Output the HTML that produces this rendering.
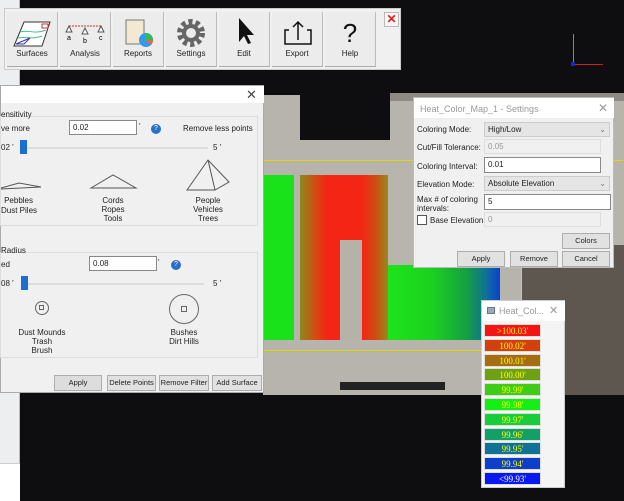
<!DOCTYPE html>
<html><head><style>
*{margin:0;padding:0;box-sizing:border-box}
body{width:624px;height:501px;background:#0e0e10;position:relative;overflow:hidden;font-family:"Liberation Sans",sans-serif;font-size:8px;color:#222}
.a{position:absolute;white-space:nowrap}
.tb{left:4px;top:8px;width:397px;height:62px;background:#f0f0f0;border:1px solid #ccc}
.btn{position:absolute;top:3px;width:51px;height:55px;background:#ececec;border-right:1px solid #bbb;border-bottom:1px solid #aaa;text-align:center;font-size:8px}
.btn span{position:absolute;left:0;right:0;bottom:8px}
.inp{position:absolute;background:#fff;border:1px solid #888;height:15px;font-size:8px;padding:2px 3px;white-space:nowrap}
.pb{position:absolute;background:#e1e1e1;border:1px solid #adadad;font-size:7.5px;text-align:center;height:16px;line-height:14px;white-space:nowrap;overflow:hidden}
.leg div{height:13px;margin-bottom:1.8px;width:57px;text-align:center;color:#ff0;font-family:"Liberation Serif",serif;font-size:9px;line-height:13px;border:1px solid #ddd}
</style></head><body>
<div class="a" style="left:0;top:0;width:20px;height:501px;background:#eceeef;border-right:1px solid #bbb"></div>
<div class="a" style="left:0;top:463px;width:20px;height:38px;background:#fff;border-top:1px solid #ccc"></div>
<div class="a" style="left:263px;top:95px;width:361px;height:300px;background:#b7b4ad"></div>
<div class="a" style="left:300px;top:85px;width:90px;height:55px;background:#0e0e10"></div>
<div class="a" style="left:390px;top:93px;width:234px;height:8px;background:#8f8a84"></div>
<div class="a" style="left:522px;top:245px;width:102px;height:150px;background:#5e5750"></div>
<div class="a" style="left:263px;top:160px;width:360px;height:1px;background:#e0d800"></div>
<div class="a" style="left:263px;top:350px;width:260px;height:1px;background:#e0d800"></div>
<div class="a" style="left:521px;top:250px;width:1px;height:100px;background:#e0d800"></div>
<div class="a" style="left:263px;top:175px;width:31px;height:165px;background:#19e21a"></div>
<div class="a" style="left:300px;top:175px;width:88px;height:165px;background:linear-gradient(90deg,#8a8a20,#d34b10 18%,#f52515 30%,#f52515 70%,#d04a10 85%,#9b8820)"></div>
<div class="a" style="left:340px;top:240px;width:22px;height:100px;background:#b5b2aa"></div>
<div class="a" style="left:388px;top:175px;width:112px;height:165px;background:linear-gradient(90deg,#1ee41a,#1bd020 40%,#15a040 70%,#0f6f9a 88%,#0b3fd0)"></div>
<div class="a" style="left:388px;top:175px;width:30px;height:90px;background:#b8b5ae"></div>
<div class="a" style="left:340px;top:382px;width:105px;height:8px;background:#222"></div>
<div class="a tb">
<div class="btn" style="left:2px"><svg width="44" height="34" style="margin-top:4px"><path d="M4 30 L14 6 L40 6 L32 30Z" fill="#fff" stroke="#333"/><path d="M10 16c8-3 14 3 26-2M8 22c8-2 14 2 24-2" stroke="#4b9" fill="none"/><path d="M6 28 L20 22 L14 28Z" fill="none" stroke="#33a"/><path d="M32 8h6v4h-6z" fill="none" stroke="#c33"/></svg><span>Surfaces</span></div>
<div class="btn" style="left:55px"><svg width="44" height="30" style="margin-top:4px"><path d="M6 10H38" stroke="#c33" stroke-dasharray="2 1"/><path d="M6 10l-3 6h6zM22 12l-3 6h6zM38 10l-3 6h6z" fill="#fff" stroke="#555"/><text x="4" y="24" font-size="7">a</text><text x="20" y="27" font-size="7">b</text><text x="36" y="24" font-size="7">c</text></svg><span>Analysis</span></div>
<div class="btn" style="left:108px"><svg width="44" height="34" style="margin-top:4px"><rect x="10" y="4" width="18" height="24" fill="#f3e8d2" stroke="#777"/><circle cx="30" cy="24" r="7" fill="#39e"/><path d="M30 24V17a7 7 0 0 1 7 7z" fill="#3b5"/><path d="M30 24h7a7 7 0 0 1-2 5z" fill="#e63"/></svg><span>Reports</span></div>
<div class="btn" style="left:161px"><svg width="44" height="34" style="margin-top:4px"><circle cx="22" cy="17" r="11" fill="none" stroke="#666" stroke-width="6" stroke-dasharray="4 3"/><circle cx="22" cy="17" r="7" fill="none" stroke="#666" stroke-width="4"/></svg><span>Settings</span></div>
<div class="btn" style="left:214px"><svg width="44" height="34" style="margin-top:2px"><path d="M17 4V28l5-6 4 8 3-1-4-8h7z" fill="#111"/></svg><span>Edit</span></div>
<div class="btn" style="left:267px"><svg width="44" height="34" style="margin-top:4px"><path d="M14 14h-4v14h26V14h-4M23 24V6M18 11l5-5 5 5" fill="none" stroke="#111" stroke-width="1.5"/></svg><span>Export</span></div>
<div class="btn" style="left:320px"><div style="font-size:26px;margin-top:6px;color:#111">?</div><span>Help</span></div>
<div class="a" style="left:379px;top:3px;width:15px;height:15px;background:#f6f6f6;border:1px solid #bbb;color:#d22;font-size:12px;font-weight:bold;text-align:center;line-height:13px">✕</div>
</div>
<div class="a" style="left:573px;top:34px;width:1px;height:30px;background:#2c2"></div>
<div class="a" style="left:573px;top:64px;width:30px;height:1px;background:#c22"></div>
<div class="a" style="left:571px;top:62px;width:4px;height:4px;background:#22c"></div>
<div class="a" style="left:0;top:85px;width:264px;height:308px;background:#f0f0f0;border:1px solid #aaa">
<div class="a" style="left:0;top:0;width:263px;height:17px;background:#fff"></div>
<div class="a" style="left:245px;top:1px;font-size:13px;color:#444">✕</div>
<div class="a" style="left:-1px;top:30px;width:258px;height:110px;border:1px solid #ddd"></div>
<div class="a" style="left:0;top:24px">ensitivity</div>
<div class="a" style="left:0;top:38px">ve more</div>
<div class="inp" style="left:68px;top:34px;width:68px">0.02</div>
<div class="a" style="left:138px;top:36px">'</div>
<div class="a" style="left:150px;top:38px;width:10px;height:10px;border-radius:50%;background:#2a6fc9;color:#fff;font-size:7px;text-align:center;line-height:10px">?</div>
<div class="a" style="left:182px;top:38px">Remove less points</div>
<div class="a" style="left:0;top:57px">02 '</div>
<div class="a" style="left:25px;top:61px;width:182px;height:2px;background:#ddd"></div>
<div class="a" style="left:19px;top:54px;width:7px;height:14px;background:#1a6fd0"></div>
<div class="a" style="left:212px;top:57px">5 '</div>
<svg class="a" style="left:0;top:72px" width="250" height="35"><path d="M0 30 L18 25 L40 29 L0 31" fill="none" stroke="#555"/><path d="M90 30L112 17 135 30z" fill="none" stroke="#555"/><path d="M186 32L207 2 228 24 214 32z M207 2L214 32" fill="none" stroke="#555"/></svg>
<div class="a" style="left:0;top:110px;width:32px;text-align:right;line-height:10px">Pebbles<br>Dust Piles</div>
<div class="a" style="left:92px;top:110px;width:40px;text-align:center;line-height:9px">Cords<br>Ropes<br>Tools</div>
<div class="a" style="left:186px;top:110px;width:42px;text-align:center;line-height:9px">People<br>Vehicles<br>Trees</div>
<div class="a" style="left:-1px;top:166px;width:258px;height:106px;border:1px solid #ddd"></div>
<div class="a" style="left:0;top:160px">Radius</div>
<div class="a" style="left:0;top:174px">ed</div>
<div class="inp" style="left:88px;top:170px;width:68px">0.08</div>
<div class="a" style="left:157px;top:172px">'</div>
<div class="a" style="left:170px;top:174px;width:10px;height:10px;border-radius:50%;background:#2a6fc9;color:#fff;font-size:7px;text-align:center;line-height:10px">?</div>
<div class="a" style="left:0;top:193px">08 '</div>
<div class="a" style="left:25px;top:197px;width:178px;height:2px;background:#ddd"></div>
<div class="a" style="left:20px;top:190px;width:7px;height:14px;background:#1a6fd0"></div>
<div class="a" style="left:212px;top:193px">5 '</div>
<div class="a" style="left:34px;top:215px;width:14px;height:14px;border:1px solid #666;border-radius:50%"></div>
<div class="a" style="left:38px;top:219px;width:5px;height:5px;border:1px solid #666"></div>
<div class="a" style="left:168px;top:208px;width:30px;height:30px;border:1px solid #666;border-radius:50%"></div>
<div class="a" style="left:180px;top:220px;width:6px;height:6px;border:1px solid #666"></div>
<div class="a" style="left:15px;top:242px;width:52px;text-align:center;line-height:9px">Dust Mounds<br>Trash<br>Brush</div>
<div class="a" style="left:158px;top:242px;width:50px;text-align:center;line-height:9px">Bushes<br>Dirt Hills</div>
<div class="pb" style="left:53px;top:289px;width:48px;background:#ddd">Apply</div>
<div class="pb" style="left:106px;top:289px;width:49px">Delete Points</div>
<div class="pb" style="left:158px;top:289px;width:50px">Remove Filter</div>
<div class="pb" style="left:211px;top:289px;width:50px">Add Surface</div>
</div>
<div class="a" style="left:413px;top:97px;width:201px;height:171px;background:#f0f0f0;border:1px solid #bbb">
<div class="a" style="left:0;top:0;width:200px;height:20px;background:#fff"></div>
<div class="a" style="left:6px;top:6px;color:#999;font-size:9px">Heat_Color_Map_1 - Settings</div>
<div class="a" style="left:184px;top:3px;color:#999;font-size:12px">✕</div>
<div class="a" style="left:3px;top:27px">Coloring Mode:</div>
<div class="inp" style="left:70px;top:24px;width:126px;background:#e5e5e5;border-color:#ccc">High/Low<span style="float:right;color:#777">⌄</span></div>
<div class="a" style="left:3px;top:45px">Cut/Fill Tolerance:</div>
<div class="inp" style="left:70px;top:41px;width:117px;background:#f0f0f0;border-color:#ddd;color:#999">0.05</div>
<div class="a" style="left:3px;top:64px">Coloring Interval:</div>
<div class="inp" style="left:70px;top:59px;width:117px;height:16px">0.01</div>
<div class="a" style="left:3px;top:82px">Elevation Mode:</div>
<div class="inp" style="left:70px;top:78px;width:126px;background:#e5e5e5;border-color:#ccc">Absolute Elevation<span style="float:right;color:#777">⌄</span></div>
<div class="a" style="left:3px;top:97px;line-height:9px">Max # of coloring<br>intervals:</div>
<div class="inp" style="left:70px;top:96px;width:127px;height:16px">5</div>
<div class="a" style="left:3px;top:117px;width:10px;height:10px;border:1px solid #555;background:#fff"></div>
<div class="a" style="left:16px;top:118px">Base Elevation:</div>
<div class="inp" style="left:70px;top:114px;width:117px;background:#f0f0f0;border-color:#ddd;color:#999">0</div>
<div class="pb" style="left:148px;top:135px;width:48px">Colors</div>
<div class="pb" style="left:43px;top:153px;width:48px">Apply</div>
<div class="pb" style="left:96px;top:153px;width:48px">Remove</div>
<div class="pb" style="left:148px;top:153px;width:48px">Cancel</div>
</div>
<div class="a" style="left:481px;top:300px;width:84px;height:188px;background:#f4f4f4;border:1px solid #ccc">
<div class="a" style="left:0;top:0;width:83px;height:20px;background:#fff"></div>
<div class="a" style="left:5px;top:6px;width:8px;height:7px;border:1px solid #678;background:#9ab"></div>
<div class="a" style="left:17px;top:5px;color:#999;font-size:9px">Heat_Col...</div>
<div class="a" style="left:67px;top:3px;color:#999;font-size:11px">✕</div>
<div class="a leg" style="left:2px;top:23px">
<div style="background:#f51414">&gt;100.03'</div>
<div style="background:#d2410c">100.02'</div>
<div style="background:#a36d10">100.01'</div>
<div style="background:#6fa012">100.00'</div>
<div style="background:#3ecc14">99.99'</div>
<div style="background:#14f014">99.98'</div>
<div style="background:#18cc3c">99.97'</div>
<div style="background:#13a068">99.96'</div>
<div style="background:#0f7296">99.95'</div>
<div style="background:#0c40cc">99.94'</div>
<div style="background:#0818f0;color:#fff">&lt;99.93'</div>
</div></div>
</body></html>
